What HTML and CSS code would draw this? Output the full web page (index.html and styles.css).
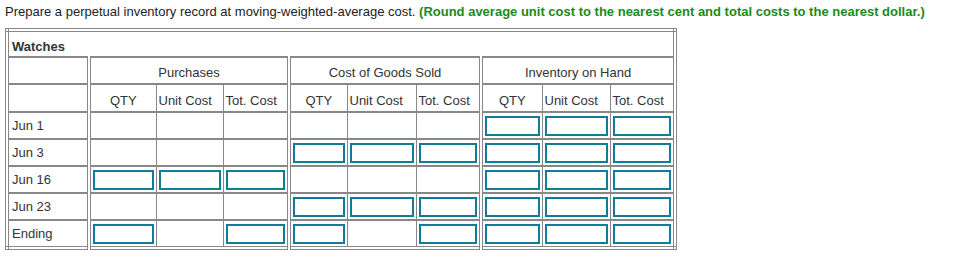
FILE: index.html
```html
<!DOCTYPE html>
<html lang="en">
<head>
<meta charset="utf-8">
<title>Perpetual inventory record</title>
<link rel="stylesheet" href="styles.css">
</head>
<body>
<div class="page">
  <p class="prompt">Prepare a perpetual inventory record at moving-weighted-average cost. <strong class="hint">(Round average unit cost to the nearest cent and total costs to the nearest dollar.)</strong></p>
  <table class="record">
    <colgroup>
      <col class="c-label">
      <col class="c-pq"><col class="c-pu"><col class="c-pt">
      <col class="c-cq"><col class="c-cu"><col class="c-ct">
      <col class="c-iq"><col class="c-iu"><col class="c-it">
    </colgroup>
    <tr class="row-head">
      <th colspan="10" class="title-cell">Watches</th>
    </tr>
    <tr class="row-head">
      <td class="label"></td>
      <th colspan="3" class="gs group-cell">Purchases</th>
      <th colspan="3" class="gs group-cell">Cost of Goods Sold</th>
      <th colspan="3" class="gs group-cell">Inventory on Hand</th>
    </tr>
    <tr class="row-head row-sub">
      <td class="label"></td>
      <th class="gs qty">QTY</th><th class="cost">Unit Cost</th><th class="cost">Tot. Cost</th>
      <th class="gs qty">QTY</th><th class="cost">Unit Cost</th><th class="cost">Tot. Cost</th>
      <th class="gs qty">QTY</th><th class="cost">Unit Cost</th><th class="cost">Tot. Cost</th>
    </tr>
    <tr class="row-data">
      <td class="label">Jun 1</td>
      <td class="gs"></td><td></td><td></td>
      <td class="gs"></td><td></td><td></td>
      <td class="gs"><input class="entry" type="text" aria-label="Jun 1 inventory quantity"></td>
      <td><input class="entry" type="text" aria-label="Jun 1 inventory unit cost"></td>
      <td><input class="entry" type="text" aria-label="Jun 1 inventory total cost"></td>
    </tr>
    <tr class="row-data">
      <td class="label">Jun 3</td>
      <td class="gs"></td><td></td><td></td>
      <td class="gs"><input class="entry" type="text" aria-label="Jun 3 COGS quantity"></td>
      <td><input class="entry" type="text" aria-label="Jun 3 COGS unit cost"></td>
      <td><input class="entry" type="text" aria-label="Jun 3 COGS total cost"></td>
      <td class="gs"><input class="entry" type="text" aria-label="Jun 3 inventory quantity"></td>
      <td><input class="entry" type="text" aria-label="Jun 3 inventory unit cost"></td>
      <td><input class="entry" type="text" aria-label="Jun 3 inventory total cost"></td>
    </tr>
    <tr class="row-data">
      <td class="label">Jun 16</td>
      <td class="gs"><input class="entry" type="text" aria-label="Jun 16 purchases quantity"></td>
      <td><input class="entry" type="text" aria-label="Jun 16 purchases unit cost"></td>
      <td><input class="entry" type="text" aria-label="Jun 16 purchases total cost"></td>
      <td class="gs"></td><td></td><td></td>
      <td class="gs"><input class="entry" type="text" aria-label="Jun 16 inventory quantity"></td>
      <td><input class="entry" type="text" aria-label="Jun 16 inventory unit cost"></td>
      <td><input class="entry" type="text" aria-label="Jun 16 inventory total cost"></td>
    </tr>
    <tr class="row-data">
      <td class="label">Jun 23</td>
      <td class="gs"></td><td></td><td></td>
      <td class="gs"><input class="entry" type="text" aria-label="Jun 23 COGS quantity"></td>
      <td><input class="entry" type="text" aria-label="Jun 23 COGS unit cost"></td>
      <td><input class="entry" type="text" aria-label="Jun 23 COGS total cost"></td>
      <td class="gs"><input class="entry" type="text" aria-label="Jun 23 inventory quantity"></td>
      <td><input class="entry" type="text" aria-label="Jun 23 inventory unit cost"></td>
      <td><input class="entry" type="text" aria-label="Jun 23 inventory total cost"></td>
    </tr>
    <tr class="row-data row-last">
      <td class="label">Ending</td>
      <td class="gs"><input class="entry" type="text" aria-label="Ending purchases quantity"></td>
      <td></td>
      <td><input class="entry" type="text" aria-label="Ending purchases total cost"></td>
      <td class="gs"><input class="entry" type="text" aria-label="Ending COGS quantity"></td>
      <td></td>
      <td><input class="entry" type="text" aria-label="Ending COGS total cost"></td>
      <td class="gs"><input class="entry" type="text" aria-label="Ending inventory quantity"></td>
      <td><input class="entry" type="text" aria-label="Ending inventory unit cost"></td>
      <td><input class="entry" type="text" aria-label="Ending inventory total cost"></td>
    </tr>
  </table>
</div>
</body>
</html>
```

FILE: styles.css
```css
body {
  margin: 0;
  background: #ffffff;
  font-family: "Liberation Sans", Arial, sans-serif;
  font-size: 13px;
  color: #333333;
}

.page {
  padding: 4px 5px;
}

.prompt {
  margin: 0 0 9px;
  line-height: 15px;
  color: #222222;
}

.hint {
  color: #1a8a1a;
  font-weight: bold;
}

.record {
  border-collapse: collapse;
  table-layout: fixed;
  width: 672px;
  border: 4px double #888888;
}

.c-label { width: 82px; }
.c-pq { width: 67px; }
.c-pu { width: 67px; }
.c-pt { width: 66px; }
.c-cq { width: 58px; }
.c-cu { width: 69px; }
.c-ct { width: 65px; }
.c-iq { width: 61px; }
.c-iu { width: 68px; }
.c-it { width: 65px; }

.record td,
.record th {
  padding: 0;
  border-top: 2px solid #888888;
  border-bottom: 2px solid #888888;
  border-left: 1px solid #888888;
  border-right: 1px solid #888888;
  font-weight: normal;
  vertical-align: middle;
  white-space: nowrap;
  overflow: hidden;
}

.record .gs {
  border-left: 4px double #888888;
}

.row-head {
  height: 27px;
}

.row-sub {
  height: 28px;
}

.row-data {
  height: 27px;
}

.row-last {
  height: 28px;
}

.record .title-cell {
  text-align: left;
  font-weight: bold;
  padding: 4px 0 0 3px;
}

.record .group-cell {
  text-align: center;
  padding-top: 4px;
}

.record .qty {
  text-align: center;
  padding-top: 4px;
}

.record .cost {
  text-align: left;
  padding: 4px 0 0 2px;
}

.record .label {
  text-align: left;
  padding-left: 3px;
}

.entry {
  display: block;
  box-sizing: border-box;
  width: calc(100% - 4px);
  height: 20px;
  margin: 1px auto 0;
  padding: 0;
  border: 2px solid #127c98;
  border-radius: 0;
  background: #ffffff;
  font: inherit;
}
```
